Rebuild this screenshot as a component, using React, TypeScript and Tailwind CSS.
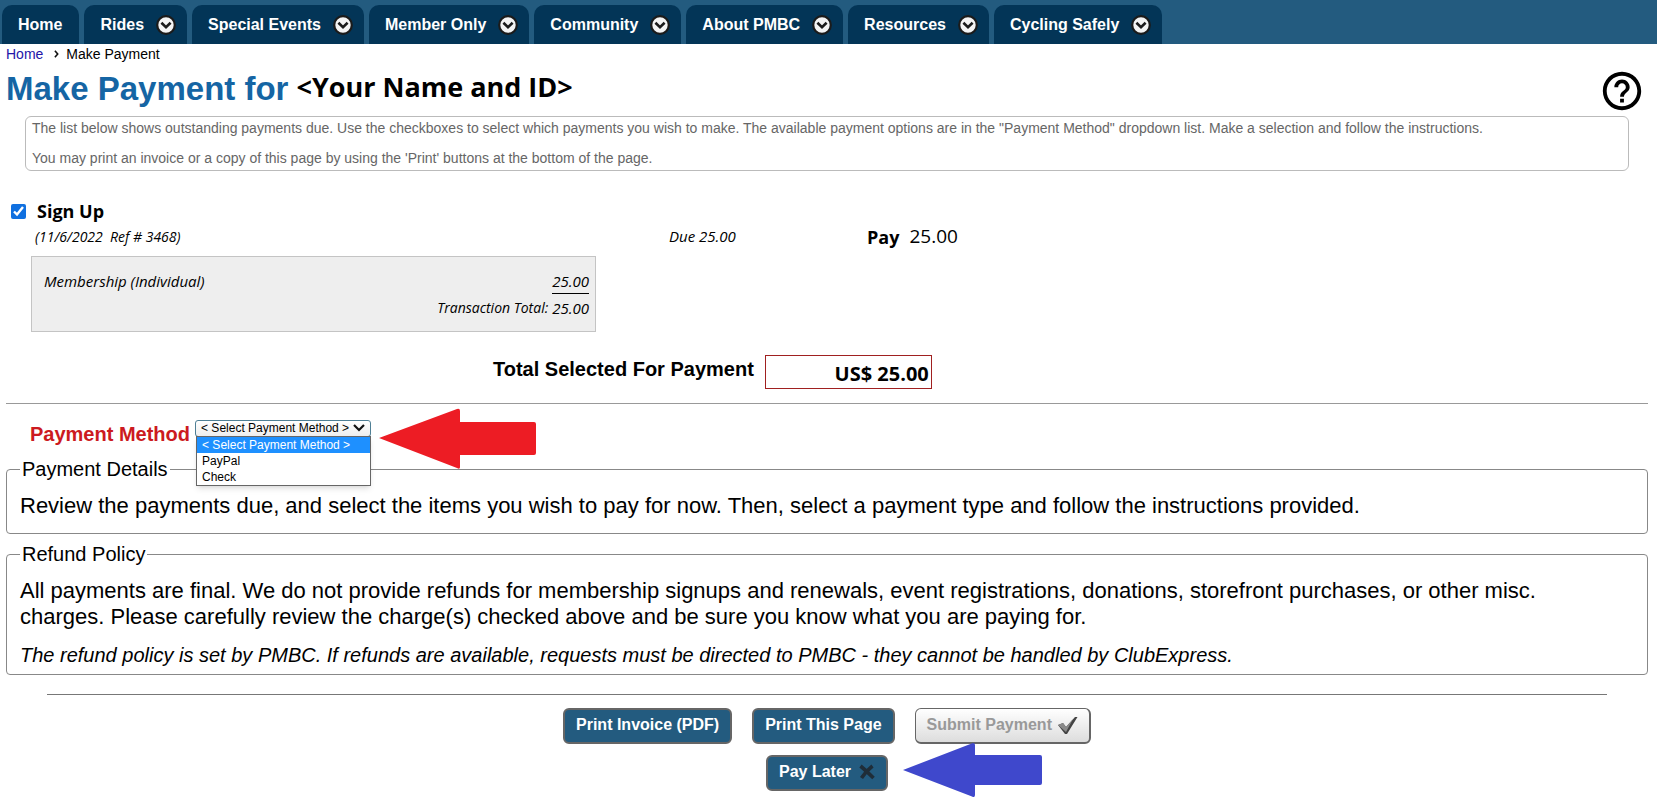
import { useState } from 'react'
import { MdHelpOutline } from 'react-icons/md'

const NAV_ITEMS = [
  { label: 'Home', menu: false },
  { label: 'Rides', menu: true },
  { label: 'Special Events', menu: true },
  { label: 'Member Only', menu: true },
  { label: 'Community', menu: true },
  { label: 'About PMBC', menu: true },
  { label: 'Resources', menu: true },
  { label: 'Cycling Safely', menu: true },
]

const METHODS = ['< Select Payment Method >', 'PayPal', 'Check']

const SEGOE = "font-['Open_Sans','Noto_Sans',sans-serif]"

const BUTTON =
  'flex h-9 items-center rounded-md border-2 border-[#666] bg-[#235b7f] px-[11px] pb-0.5 text-base font-bold text-white'

function MenuBadge() {
  return (
    <svg viewBox="0 0 20 20" className="size-5" aria-hidden="true">
      <circle cx="10" cy="10" r="8.8" fill="#f4f4f4" stroke="#1b1b1b" strokeWidth="2.2" />
      <path d="m5.4 7.800 4.600 4.400 4.600-4.400" fill="none" stroke="#1b1b1b" strokeWidth="2.6" />
    </svg>
  )
}

function NavBar() {
  return (
    <nav className="flex h-11 items-end gap-[5px] bg-[#235b7f] pl-0.5">
      {NAV_ITEMS.map(({ label, menu }) => (
        <a
          key={label}
          href="#"
          className={`flex h-[39px] items-center gap-3 rounded-t-[10px] bg-[#033557] pl-4 text-base font-bold text-white ${
            menu ? 'pr-[11px]' : 'pr-[17px]'
          }`}
        >
          {label}
          {menu && <MenuBadge />}
        </a>
      ))}
    </nav>
  )
}

function LineItems() {
  return (
    <div className="ml-[25px] h-[76px] w-[565px] border border-[#c4c4c4] bg-[#eee] pt-3 pr-1.5 pl-3">
      <table className="w-full text-[15px] leading-5 italic">
        <tbody>
          <tr className="h-6 align-middle">
            <td>Membership (Individual)</td>
            <td className="w-9 border-b border-black text-right">25.00</td>
          </tr>
          <tr className="h-[30px] align-middle">
            <td className="pr-1 text-right text-sm">Transaction Total:</td>
            <td className="text-right">25.00</td>
          </tr>
        </tbody>
      </table>
    </div>
  )
}

function PaymentMethod() {
  const [method, setMethod] = useState(METHODS[0])

  return (
    <div className="flex items-center gap-[5px] pt-1.5 pl-6">
      <label htmlFor="method" className="pt-3 text-xl leading-6 font-bold text-[#cc1a20]">
        Payment Method
      </label>
      <div className="relative">
        <select
          id="method"
          value={method}
          onChange={(e) => setMethod(e.target.value)}
          className="block h-[17px] w-44 appearance-none rounded-[3px] border border-[#4f7f95] bg-gradient-to-b from-white to-[#eee] py-0 pl-[5px] text-xs leading-[15px] text-black"
        >
          {METHODS.map((m) => (
            <option key={m}>{m}</option>
          ))}
        </select>
        <svg viewBox="0 0 12 8" className="absolute top-1 right-1.5 h-2 w-3" aria-hidden="true">
          <path d="m1 1 5 5 5-5" fill="none" stroke="#111" strokeWidth="2.2" />
        </svg>
        <ul
          role="listbox"
          aria-label="Payment methods"
          className="absolute top-4 right-0 left-px z-10 border border-[#666] bg-white text-xs leading-4 shadow-md"
        >
          {METHODS.map((m) => (
            <li
              key={m}
              role="option"
              aria-selected={m === method}
              onClick={() => setMethod(m)}
              className={`pl-[5px] ${m === method ? 'bg-[#1e90ff] text-white' : ''}`}
            >
              {m}
            </li>
          ))}
        </ul>
        <svg viewBox="0 0 157 61" className="absolute -top-3 left-[184px] h-[61px] w-[157px]" aria-hidden="true">
          <path d="M0 30 78 1q3-1 3 2v11h74q2 0 2 2v29q0 2-2 2H81v12q0 3-3 1Z" fill="#ed1c24" />
        </svg>
      </div>
    </div>
  )
}

export default function App() {
  return (
    <div className="min-h-screen bg-white font-['Liberation_Sans',Arial,sans-serif] text-black">
      <NavBar />

      <main className="pr-[9px] pl-1.5">
        <div className="flex items-center gap-[7px] pt-0.5 text-sm leading-4">
          <a href="#" className="text-[#2315a8]">
            Home
          </a>
          <svg viewBox="0 0 6 10" className="ml-1 h-2 w-[5px]" aria-hidden="true">
            <path d="m1 1 3.5 4L1 9" fill="none" stroke="#111" strokeWidth="2" />
          </svg>
          <span>Make Payment</span>
        </div>

        <div className="flex h-[54px] items-center">
          <h1 className="flex items-center gap-2 text-[33px] leading-9 font-bold text-[#1565a4]">
            Make Payment for
            <span className="pb-1 font-['Open_Sans','Noto_Sans',sans-serif] text-[27px] leading-8 text-black">
              &lt;Your Name and ID&gt;
            </span>
          </h1>
          <button type="button" aria-label="Help" className="mr-[3px] ml-auto pt-1">
            <MdHelpOutline className="size-[46px]" />
          </button>
        </div>

        <div className="mr-[19px] ml-[19px] rounded-md border border-[#bbb] px-1.5 py-1 text-sm leading-[15px] text-[#666]">
          <p className="mb-[15px]">
            The list below shows outstanding payments due. Use the checkboxes to select which payments you wish to make.
            The available payment options are in the "Payment Method" dropdown list. Make a selection and follow the
            instructions.
          </p>
          <p>You may print an invoice or a copy of this page by using the 'Print' buttons at the bottom of the page.</p>
        </div>

        <section className={`pt-[26px] ${SEGOE}`}>
          <div className="flex items-center gap-[11px] pl-[5px]">
            <input id="signup" type="checkbox" defaultChecked className="size-[15px] accent-[#1070e0]" />
            <label htmlFor="signup" className="text-lg leading-7 font-bold">
              Sign Up
            </label>
          </div>
          <div className="flex h-[31px] items-center pb-2 pl-[29px] text-sm italic">
            <span className="w-[634px]">(11/6/2022&nbsp; Ref # 3468)</span>
            <span className="w-[198px] text-[15px]">Due 25.00</span>
            <span className="flex items-center gap-2.5 text-lg not-italic">
              <b>Pay</b>
              <span className="text-[19px]">25.00</span>
            </span>
          </div>
          <LineItems />
        </section>

        <div className="flex pt-[23px] pb-3.5 pl-[487px]">
          <span className="text-xl leading-7 font-bold">Total Selected For Payment</span>
          <output
            className={`ml-[11px] h-[34px] w-[167px] border border-[#a02020] pt-1 pr-0.5 text-right text-xl leading-7 font-bold ${SEGOE}`}
          >
            US$ 25.00
          </output>
        </div>
        <hr className="border-[#999]" />

        <PaymentMethod />

        <fieldset className="mt-[11px] rounded-sm border border-[#888] px-[13px] pt-3 pb-3.5 text-[22px] leading-[26px]">
          <legend className="px-0.5 text-xl leading-6">Payment Details</legend>
          Review the payments due, and select the items you wish to pay for now. Then, select a payment type and follow
          the instructions provided.
        </fieldset>

        <fieldset className="mt-2 rounded-sm border border-[#888] px-[13px] pt-3 pb-1.5 text-[22px] leading-[26px]">
          <legend className="px-0.5 text-xl leading-6">Refund Policy</legend>
          <p>
            All payments are final. We do not provide refunds for membership signups and renewals, event registrations,
            donations, storefront purchases, or other misc.
            <br />
            charges. Please carefully review the charge(s) checked above and be sure you know what you are paying for.
          </p>
          <p className="mt-3 text-xl leading-[26px] italic">
            The refund policy is set by PMBC. If refunds are available, requests must be directed to PMBC - they cannot
            be handled by ClubExpress.
          </p>
        </fieldset>

        <hr className="mx-[41px] mt-[19px] border-[#777]" />

        <div className="flex justify-center gap-5 pt-[13px]">
          <button type="button" className={BUTTON}>
            Print Invoice (PDF)
          </button>
          <button type="button" className={BUTTON}>
            Print This Page
          </button>
          <button
            type="button"
            disabled
            className="flex h-9 items-center gap-1.5 rounded-md border border-r-2 border-b-2 border-[#666] bg-gradient-to-b from-white to-[#ddd] px-[11px] pb-0.5 text-base font-bold text-[#999]"
          >
            Submit Payment
            <svg viewBox="0 0 20 20" className="size-5" aria-hidden="true">
              <path d="m0 10 5-2 3 4 9-10h2.500L9 19H7Z" fill="#444" />
              <path d="m0 10 5-2 3 4 7-8-7 13Z" fill="#8a8a8a" />
            </svg>
          </button>
        </div>
        <div className="flex justify-center pt-[11px]">
          <div className="relative">
            <button type="button" className={BUTTON}>
              Pay Later
              <svg viewBox="0 0 16 16" className="ml-2 size-4" aria-hidden="true">
                <path d="M1.500 2q6 5 13 12M13.500 2Q7 7 2.500 14" fill="none" stroke="#1f2d38" strokeWidth="3.600" />
              </svg>
            </button>
            <svg viewBox="0 0 139 54" className="absolute -top-3 left-[137px] h-[54px] w-[139px]" aria-hidden="true">
              <path d="M0 27 70 0q2 0 2 2v10h65q2 0 2 2v26q0 2-2 2H72v10q0 3-3 1.500Z" fill="#3f48cc" />
            </svg>
          </div>
        </div>
      </main>
    </div>
  )
}
